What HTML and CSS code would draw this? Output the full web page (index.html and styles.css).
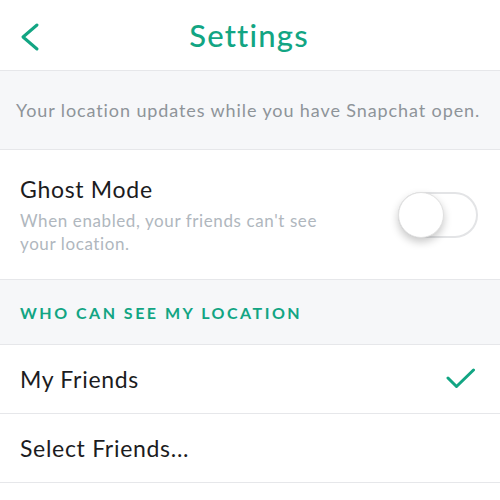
FILE: index.html
```html
<!DOCTYPE html>
<html>
<head>
<meta charset="utf-8">
<link rel="stylesheet" href="styles.css">
</head>
<body>
<div class="screen">
  <header class="topbar">
    <svg class="back" width="20" height="30" viewBox="0 0 20 30">
      <path d="M17 3 L3 15 L17 27" fill="none" stroke="#12a583" stroke-width="3" stroke-linecap="round" stroke-linejoin="round"/>
    </svg>
    <h1 class="title">Settings</h1>
  </header>

  <div class="note">Your location updates while you have Snapchat open.</div>

  <div class="row ghost">
    <div class="ghost-text">
      <div class="label">Ghost Mode</div>
      <div class="hint">When enabled, your friends can't see your location.</div>
    </div>
    <div class="switch"><div class="knob"></div></div>
  </div>

  <div class="section">WHO CAN SEE MY LOCATION</div>

  <div class="row option">
    <span class="label">My Friends</span>
    <svg class="check" width="30" height="22" viewBox="0 0 30 22">
      <path d="M2 10 L10.5 18.5 L27.5 2" fill="none" stroke="#12a583" stroke-width="3" stroke-linecap="round" stroke-linejoin="round"/>
    </svg>
  </div>
  <div class="row option">
    <span class="label">Select Friends...</span>
  </div>
</div>
</body>
</html>
```

FILE: styles.css
```css
* { box-sizing: border-box; }

body {
  margin: 0;
  background: #ffffff;
  font-family: Lato, "Noto Sans", sans-serif;
}

.screen {
  width: 500px;
}

.topbar {
  position: relative;
  height: 71px;
  display: flex;
  align-items: center;
  justify-content: center;
  border-bottom: 1px solid #e6e7ea;
}

.back {
  position: absolute;
  left: 20px;
  top: 22px;
}

.title {
  margin: 0 0 0 -2px;
  font-size: 31px;
  font-weight: 500;
  color: #12a583;
  letter-spacing: 1.2px;
}

.note {
  height: 79px;
  background: #f6f7f9;
  border-bottom: 1px solid #e6e7ea;
  display: flex;
  align-items: center;
  padding: 0 16px;
  font-size: 18px;
  letter-spacing: 0.9px;
  color: #8e9499;
  white-space: nowrap;
}

.row {
  display: flex;
  align-items: center;
  justify-content: space-between;
  padding: 0 24px 0 20px;
  border-bottom: 1px solid #e6e7ea;
  background: #fff;
}

.ghost {
  height: 130px;
  padding-right: 22px;
}

.ghost-text {
  width: 310px;
}

.label {
  font-size: 23px;
  letter-spacing: 0.7px;
  color: #1c1c1e;
}

.hint {
  margin-top: 6px;
  font-size: 17px;
  line-height: 23px;
  letter-spacing: 0.6px;
  color: #b0b7be;
}

.switch {
  width: 80px;
  height: 46px;
  border-radius: 23px;
  border: 2px solid #e3e4e6;
  background: #fff;
  position: relative;
}

.knob {
  position: absolute;
  left: -2px;
  top: -2px;
  width: 46px;
  height: 46px;
  border-radius: 50%;
  background: #fff;
  border: 1px solid #e0e0e0;
  box-shadow: 0 4px 8px rgba(0, 0, 0, 0.22);
}

.section {
  height: 65px;
  background: #f6f7f9;
  border-bottom: 1px solid #e6e7ea;
  display: flex;
  align-items: center;
  padding: 0 20px;
  font-size: 16px;
  font-weight: 700;
  letter-spacing: 2.5px;
  color: #12a583;
}

.option {
  height: 69px;
}
```
